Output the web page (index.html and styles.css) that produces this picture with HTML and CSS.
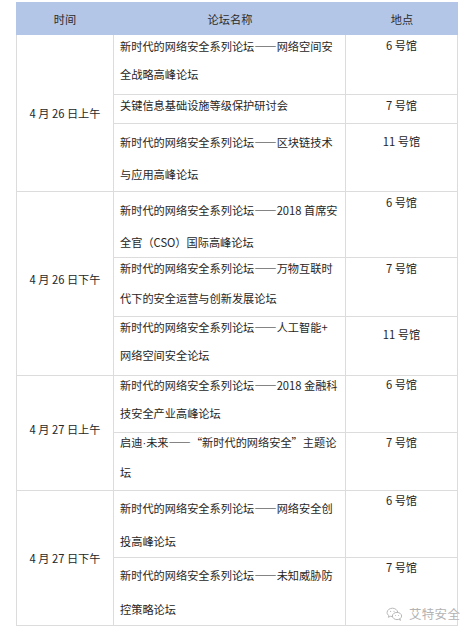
FILE: index.html
```html
<!DOCTYPE html>
<html lang="zh-CN">
<head>
<meta charset="utf-8">
<title>论坛日程</title>
<link rel="stylesheet" href="styles.css">
</head>
<body>
<div class="page">
  <div class="schedule">
    <div class="cell head">时间</div>
    <div class="cell head">论坛名称</div>
    <div class="cell head">地点</div>

    <div class="cell time s3"><p>4 月 26 日上午</p></div>
    <div class="cell title"><p class="l28 m-3">新时代的网络安全系列论坛——网络空间安<br>全战略高峰论坛</p></div>
    <div class="cell place"><p>6 号馆</p></div>
    <div class="cell title"><p class="l28 m-4">关键信息基础设施等级保护研讨会</p></div>
    <div class="cell place"><p>7 号馆</p></div>
    <div class="cell title"><p class="l32 m2">新时代的网络安全系列论坛——区块链技术<br>与应用高峰论坛</p></div>
    <div class="cell place"><p class="p7">11 号馆</p></div>

    <div class="cell time s3 up"><p>4 月 26 日下午</p></div>
    <div class="cell title"><p class="l32 m2">新时代的网络安全系列论坛——2018 首席安<br>全官（CSO）国际高峰论坛</p></div>
    <div class="cell place"><p>6 号馆</p></div>
    <div class="cell title"><p class="l30 m-5">新时代的网络安全系列论坛——万物互联时<br>代下的安全运营与创新发展论坛</p></div>
    <div class="cell place"><p>7 号馆</p></div>
    <div class="cell title"><p class="l28 m-4">新时代的网络安全系列论坛——人工智能+<br>网络空间安全论坛</p></div>
    <div class="cell place"><p class="p7">11 号馆</p></div>

    <div class="cell time s2 up"><p>4 月 27 日上午</p></div>
    <div class="cell title"><p class="l28 m-5">新时代的网络安全系列论坛——2018 金融科<br>技安全产业高峰论坛</p></div>
    <div class="cell place"><p class="m-2">6 号馆</p></div>
    <div class="cell title"><p class="l29 m-5">启迪<span class="dot">·</span>未来——“新时代的网络安全”主题论<br>坛</p></div>
    <div class="cell place"><p class="m-1">7 号馆</p></div>

    <div class="cell time s2"><p>4 月 27 日下午</p></div>
    <div class="cell title"><p class="l33 m1">新时代的网络安全系列论坛——网络安全创<br>投高峰论坛</p></div>
    <div class="cell place"><p class="m-1">6 号馆</p></div>
    <div class="cell title"><p class="l34 m0">新时代的网络安全系列论坛——未知威胁防<br>控策略论坛</p></div>
    <div class="cell place"><p class="m-1">7 号馆</p></div>
  </div>

  <div class="watermark">
    <svg class="wm-icon" width="17" height="14" viewBox="0 0 17 14" aria-hidden="true">
      <path d="M6.5 1.2c-3 0-5.4 1.9-5.4 4.3 0 1.3.7 2.4 1.8 3.2l-.5 1.6 1.9-1c.7.2 1.4.3 2.2.3" fill="none" stroke="#b8b8b8" stroke-width="1"/>
      <path d="M11.8 5.2c-.5-2.3-2.8-4-5.3-4" fill="none" stroke="#b8b8b8" stroke-width="1"/>
      <ellipse cx="11" cy="9" rx="4.6" ry="3.6" fill="none" stroke="#b8b8b8" stroke-width="1"/>
      <path d="M13.4 12.2l.9 1.3-.2-1.8" fill="none" stroke="#b8b8b8" stroke-width="1"/>
      <circle cx="4.6" cy="4.3" r=".6" fill="#b8b8b8"/>
      <circle cx="8" cy="4.3" r=".6" fill="#b8b8b8"/>
      <circle cx="9.5" cy="8.4" r=".5" fill="#b8b8b8"/>
      <circle cx="12.5" cy="8.4" r=".5" fill="#b8b8b8"/>
    </svg>
    <span class="wm-text">艾特安全</span>
  </div>
</div>
</body>
</html>
```

FILE: styles.css
```css
* { box-sizing: border-box; }

html, body {
  margin: 0;
  padding: 0;
  background: #ffffff;
}

body {
  font-family: "Noto Sans CJK SC", "Microsoft YaHei", sans-serif;
  font-size: 11.2px;
  color: #262626;
}

.page {
  position: relative;
  width: 474px;
  height: 635px;
  padding: 2px 0 0 16px;
}

.schedule {
  display: grid;
  grid-template-columns: 98px 232px 112px;
  grid-template-rows: 33px 60px 29px 68px 66px 59px 59px 57px 58px 67px 68px;
  width: 442px;
}

.cell {
  border-right: 1px solid #dcdcdc;
  border-bottom: 1px solid #dcdcdc;
  overflow: visible;
}

.cell p {
  margin: 0;
}

.head {
  background: #b4c6e7;
  border: none;
  display: flex;
  align-items: center;
  justify-content: center;
  color: #2b2b2b;
}

.time {
  grid-column: 1;
  border-left: 1px solid #dcdcdc;
  display: flex;
  align-items: center;
  justify-content: center;
  white-space: nowrap;
}

.time.up p { margin-bottom: 9px; }

.s3 { grid-row: span 3; }
.s2 { grid-row: span 2; }

.title {
  grid-column: 2;
  padding-left: 6px;
  white-space: nowrap;
}

.dot {
  font-family: "Liberation Sans", sans-serif;
}

.place {
  grid-column: 3;
  text-align: center;
  line-height: 20px;
}

.place p.p7 { padding-top: 7px; }

.l28 { line-height: 28px; }
.l29 { line-height: 29px; }
.l30 { line-height: 30px; }
.l32 { line-height: 32px; }
.l33 { line-height: 33px; }
.l34 { line-height: 34px; }

.cell p.m-5 { margin-top: -5px; }
.cell p.m-4 { margin-top: -4px; }
.cell p.m-3 { margin-top: -3px; }
.cell p.m-2 { margin-top: -2px; }
.cell p.m-1 { margin-top: -1px; }
.cell p.m0 { margin-top: 0; }
.cell p.m1 { margin-top: 1px; }
.cell p.m2 { margin-top: 2px; }

.watermark {
  position: absolute;
  left: 386px;
  top: 604px;
  display: flex;
  align-items: center;
  gap: 6px;
}

.wm-text {
  font-size: 12.5px;
  color: #b3b3b3;
  letter-spacing: 0.3px;
  text-shadow: 0 0 1px #ffffff;
}
```
